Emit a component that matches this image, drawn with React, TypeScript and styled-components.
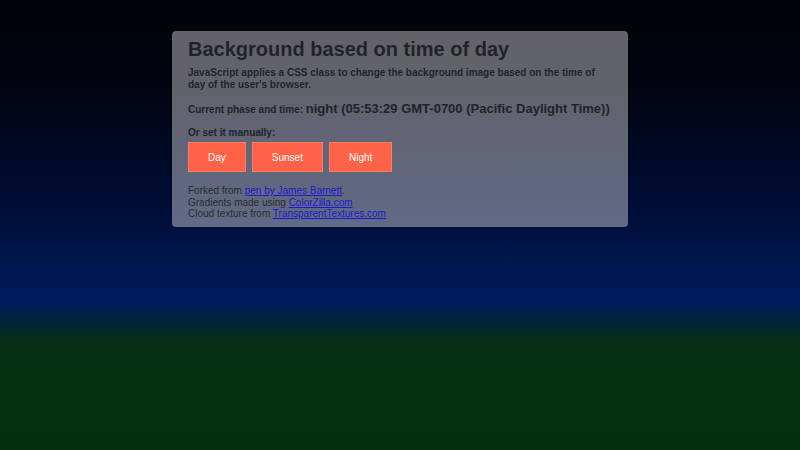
import { FC } from 'react';
import styled, { createGlobalStyle } from 'styled-components';

// ----------------------------------------------------------------------------

const GlobalStyle = createGlobalStyle`
  html, body {
    margin: 0;
    height: 100%;
  }

  body {
    font-family: 'Liberation Sans', Arial, sans-serif;
    background: linear-gradient(
      to bottom,
      #020308 0%,
      #02040f 18%,
      #000c34 45%,
      #00174f 58%,
      #001b5e 67%,
      #072f16 76%,
      #05310f 82%,
      #04300d 100%
    );
    background-attachment: fixed;
  }
`;

const Page = styled.div`
  min-height: 450px;
  display: flex;
  justify-content: center;
  align-items: flex-start;
  padding-top: 31px;
  box-sizing: border-box;
`;

const Panel = styled.section`
  width: 456px;
  box-sizing: border-box;
  padding: 7px 16px 7px;
  border-radius: 4px;
  background: rgba(255, 255, 255, 0.38);
  color: #222329;
`;

const Title = styled.h1`
  margin: 0;
  font-size: 20px;
  line-height: 23px;
  font-weight: 700;
`;

const Lead = styled.p`
  margin: 6px 0 0;
  font-size: 10px;
  line-height: 12px;
  font-weight: 700;
`;

const Phase = styled.p`
  margin: 10px 0 0;
  font-size: 10px;
  line-height: 15px;
  font-weight: 700;
`;

const PhaseValue = styled.span`
  font-size: 13px;
`;

const Label = styled.p`
  margin: 10px 0 0;
  font-size: 10px;
  line-height: 12px;
  font-weight: 700;
`;

const Buttons = styled.div`
  display: flex;
  gap: 6px;
  margin-top: 3px;
`;

const PhaseButton = styled.button`
  height: 30px;
  padding: 0 19px;
  border: 1px solid #ff7b62;
  background: #ff6347;
  color: #fff;
  font-family: inherit;
  font-size: 10px;
  cursor: pointer;
`;

const Credits = styled.div`
  margin-top: 13px;
  font-size: 10px;
  line-height: 11.5px;
  color: #2a2c34;

  a {
    color: #1a1ad0;
  }
`;

// ----------------------------------------------------------------------------

const phases = ['Day', 'Sunset', 'Night'];

const App: FC = () => {
  return (
    <>
      <GlobalStyle />
      <Page>
        <Panel>
          <Title>Background based on time of day</Title>
          <Lead>
            JavaScript applies a CSS class to change the background image based
            on the time of day of the user's browser.
          </Lead>
          <Phase>
            Current phase and time:{' '}
            <PhaseValue>night (05:53:29 GMT-0700 (Pacific Daylight Time))</PhaseValue>
          </Phase>
          <Label>Or set it manually:</Label>
          <Buttons>
            {phases.map((p) => (
              <PhaseButton key={p}>{p}</PhaseButton>
            ))}
          </Buttons>
          <Credits>
            Forked from <a href="#">pen by James Barnett</a>.
            <br />
            Gradients made using <a href="#">ColorZilla.com</a>
            <br />
            Cloud texture from <a href="#">TransparentTextures.com</a>
          </Credits>
        </Panel>
      </Page>
    </>
  );
};

export default App;
